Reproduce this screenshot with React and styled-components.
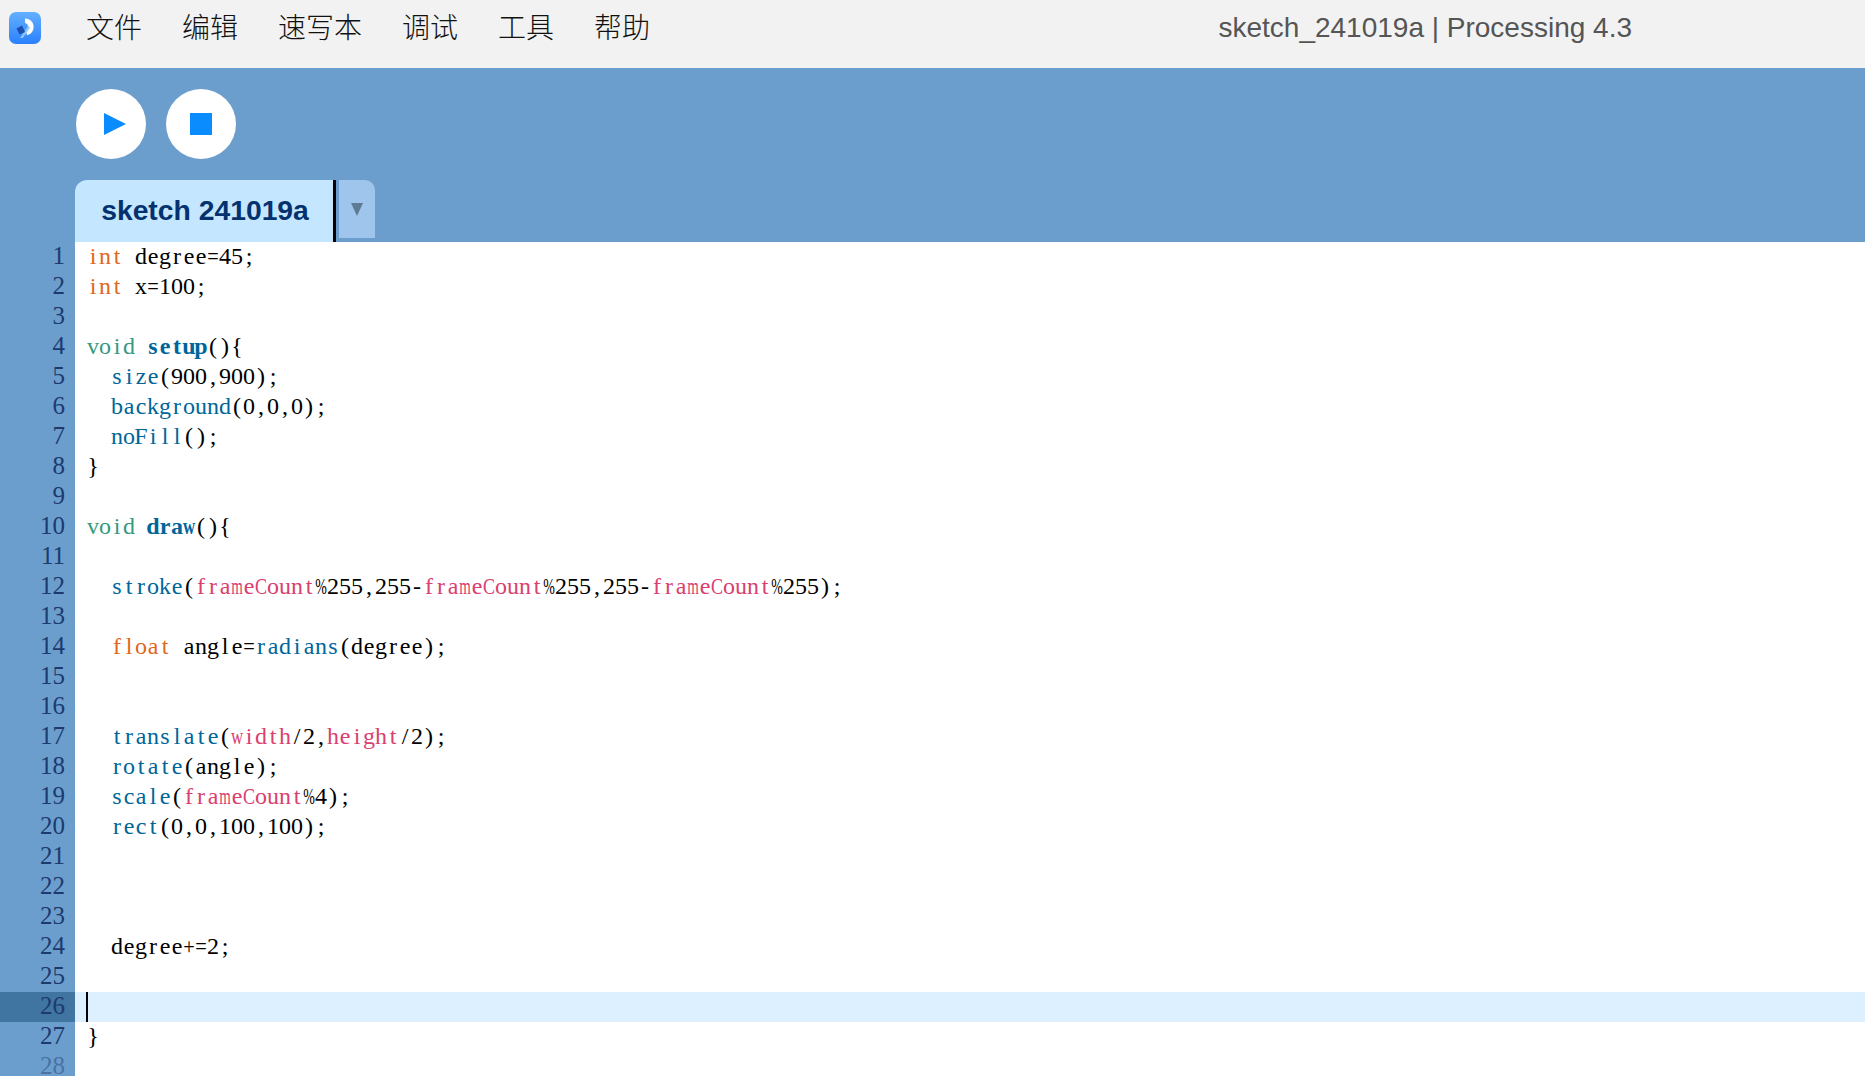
import React from "react";
import styled, { createGlobalStyle } from "styled-components";

const serif = `"Liberation Serif", "Noto Sans CJK SC", serif`;

// [text, kind] pairs for every line of the sketch
const lines = [
    [["int", "type"], [" degree=45;"]],
    [["int", "type"], [" x=100;"]],
    [],
    [["void", "void"], [" "], ["setup", "def"], ["(){"]],
    [["  "], ["size", "call"], ["(900,900);"]],
    [["  "], ["background", "call"], ["(0,0,0);"]],
    [["  "], ["noFill", "call"], ["();"]],
    [["}"]],
    [],
    [["void", "void"], [" "], ["draw", "def"], ["(){"]],
    [],
    [["  "], ["stroke", "call"], ["("], ["frameCount", "var"], ["%255,255-"], ["frameCount", "var"], ["%255,255-"], ["frameCount", "var"], ["%255);"]],
    [],
    [["  "], ["float", "type"], [" angle="], ["radians", "call"], ["(degree);"]],
    [],
    [],
    [["  "], ["translate", "call"], ["("], ["width", "var"], ["/2,"], ["height", "var"], ["/2);"]],
    [["  "], ["rotate", "call"], ["(angle);"]],
    [["  "], ["scale", "call"], ["("], ["frameCount", "var"], ["%4);"]],
    [["  "], ["rect", "call"], ["(0,0,100,100);"]],
    [],
    [],
    [],
    [["  degree+=2;"]],
    [],
    [],
    [["}"]],
    [],
];

const menus = ["文件", "编辑", "速写本", "调试", "工具", "帮助"];
const tokenColors = {
    type: "#e2661a",
    void: "#33997e",
    def: "#006699",
    call: "#006699",
    var: "#d9406f",
};
// glyphs wider than the 12px cell get pressed in, like the fixed width font of the editor
const squeeze = { m: .62, w: .7, "%": .58, C: .75, "+": .85, "=": .85 };

const App = () => (
    <Page>
        <GlobalStyle />
        <TitleBar>
            <AppIcon viewBox="0 0 32 32">
                <defs>
                    <linearGradient id="iconFill" x1="0" y1="0" x2="0" y2="1">
                        <stop offset="0" stopColor="#64b0ff" />
                        <stop offset="1" stopColor="#2a80ff" />
                    </linearGradient>
                </defs>
                <rect width="32" height="32" rx="7" fill="url(#iconFill)" />
                <path d="M16 6.500A8.500 8.500 0 0 1 18 23.300L17 19.500A4.800 4.800 0 0 0 16 10.800z" fill="#fff" />
                <path d="M11 26L19 14L21 15.500L14 26z" fill="#8cc4ff" />
                <path d="M7.500 16.500L13 13.500L16 20L10.500 22.500z" fill="#1c4fb0" />
            </AppIcon>
            <Menu>
                {menus.map( name => <MenuItem key={name}>{name}</MenuItem> )}
            </Menu>
            <WindowTitle>sketch_241019a | Processing 4.3</WindowTitle>
        </TitleBar>
        <Toolbar>
            <RoundButton>
                <PlayIcon viewBox="0 0 22 22"><path d="M0 0L22 11L0 22z" fill="#0a8cff" /></PlayIcon>
            </RoundButton>
            <RoundButton>
                <svg width="22" height="22" viewBox="0 0 22 22"><rect width="22" height="22" fill="#0a8cff" /></svg>
            </RoundButton>
        </Toolbar>
        <TabRow>
            <Tab>sketch 241019a</Tab>
            <TabDivider />
            <TabMenu>
                <svg width="12" height="13" viewBox="0 0 12 13"><path d="M0 0H12L6 13z" fill="#5f7a94" /></svg>
            </TabMenu>
        </TabRow>
        <Editor>
            {lines.map( ( tokens, i ) => {
                const active = i === 25;
                return (
                    <Line key={i} $active={active}>
                        <LineNumber $active={active} $dim={i === 27}>{i + 1}</LineNumber>
                        <Code>
                            {active && <Caret />}
                            {tokens.map( ( [text, kind], t ) => (
                                <Token key={t} $kind={kind}>
                                    {[...text].map( ( ch, c ) => <Cell key={c} $squeeze={squeeze[ch]}>{ch}</Cell> )}
                                </Token>
                            ) )}
                        </Code>
                    </Line>
                );
            } )}
        </Editor>
    </Page>
);

const GlobalStyle = createGlobalStyle`
    html, body {
        margin: 0;
        height: 100%;
        overflow: hidden;
    }
`;
const Page = styled.div`
    height: 1076px;
    overflow: hidden;
    background-color: #6b9ecd;
`;
const TitleBar = styled.div`
    display: flex;
    align-items: center;
    height: 68px;
    padding: 0 233px 12px 9px;
    box-sizing: border-box;
    background-color: #f2f2f2;
`;
const AppIcon = styled.svg`
    flex: none;
    width: 32px;
    height: 32px;
`;
const Menu = styled.div`
    display: flex;
    gap: 40px;
    margin-left: 45px;
    margin-top: -4px;
`;
const MenuItem = styled.div`
    font-family: "Noto Sans CJK SC", sans-serif;
    font-size: 28px;
    font-weight: 300;
    line-height: 32px;
    color: #111;
`;
const WindowTitle = styled.div`
    margin-left: auto;
    font-family: "Liberation Sans", sans-serif;
    font-size: 28px;
    color: #555;
`;
const Toolbar = styled.div`
    display: flex;
    gap: 20px;
    padding: 21px 0 21px 76px;
`;
const RoundButton = styled.div`
    display: flex;
    align-items: center;
    justify-content: center;
    width: 70px;
    height: 70px;
    border-radius: 50%;
    background-color: #fff;
`;
const PlayIcon = styled.svg`
    width: 22px;
    height: 22px;
    margin-left: 7px;
`;
const TabRow = styled.div`
    display: flex;
    height: 62px;
    padding-left: 75px;
`;
const Tab = styled.div`
    display: flex;
    align-items: center;
    justify-content: center;
    box-sizing: border-box;
    width: 258px;
    padding: 0 0 2px 2px;
    border-top-left-radius: 12px;
    font-family: "Liberation Sans", sans-serif;
    font-size: 28.3px;
    font-weight: 700;
    color: #04326f;
    background-color: #c4e6ff;
`;
const TabDivider = styled.div`
    width: 3px;
    background-color: #000;
`;
const TabMenu = styled.div`
    display: flex;
    align-items: center;
    justify-content: center;
    width: 36px;
    height: 58px;
    margin-left: 3px;
    border-top-right-radius: 10px;
    background-color: #9fc5ec;
`;
const Editor = styled.div`
    display: flex;
    flex-direction: column;
    background-color: #fff;
`;
const Line = styled.div`
    display: flex;
    flex: none;
    height: 30px;
    background-color: ${props => props.$active ? "#ddf0ff" : "#fff"};
`;
const LineNumber = styled.div`
    flex: none;
    box-sizing: border-box;
    width: 75px;
    padding-right: 10px;
    font-family: ${serif};
    font-size: 25px;
    line-height: 28px;
    text-align: right;
    color: ${props => props.$dim ? "#4a72a3" : "#1c3a6e"};
    background-color: ${props => props.$active ? "#3f75a0" : "#6b9ecd"};
`;
const Code = styled.div`
    position: relative;
    display: flex;
    padding-left: 12px;
    font-family: ${serif};
    font-size: 24px;
    line-height: 28px;
    white-space: pre;
    color: #000;
`;
const Token = styled.span`
    display: flex;
    color: ${props => tokenColors[props.$kind] || "#000"};
    font-weight: ${props => props.$kind === "def" ? 700 : 400};
`;
const Cell = styled.span`
    display: inline-flex;
    justify-content: center;
    width: 12px;
    transform: ${props => props.$squeeze ? `scaleX(${props.$squeeze})` : "none"};
`;
const Caret = styled.div`
    position: absolute;
    left: 11px;
    top: 0;
    width: 2px;
    height: 30px;
    background-color: #000;
`;

export default App;
